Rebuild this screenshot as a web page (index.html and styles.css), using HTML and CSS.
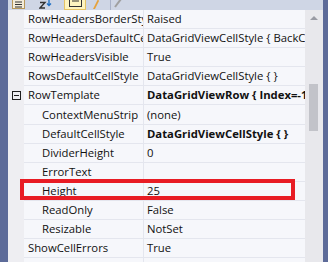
FILE: index.html
```html
<!DOCTYPE html>
<html>
<head>
<meta charset="utf-8">
<link rel="stylesheet" href="styles.css">
</head>
<body>
<div class="frame">
  <div class="toolbar">
    <span class="tb tb-cat">
      <svg width="13" height="16" viewBox="0 0 13 16"><rect x="0.5" y="0.5" width="12" height="15" fill="#f3ecd9" stroke="#b8985a"/><path d="M3 9h7M3 11.5h7M3 14h7" stroke="#333" stroke-width="1"/></svg>
    </span>
    <span class="tb tb-az">
      <svg width="14" height="16" viewBox="0 0 14 16"><path d="M1 9.5h5L1 15h5" fill="none" stroke="#333" stroke-width="1.4"/><path d="M10 6v6M8 10.5l2 2 2-2" fill="none" stroke="#1e6fc4" stroke-width="1.3"/></svg>
    </span>
    <span class="tb tb-sel">
      <svg width="13" height="16" viewBox="0 0 13 16"><rect x="0.5" y="0.5" width="12" height="14" fill="none" stroke="#333"/><path d="M3 9h7" stroke="#333"/></svg>
    </span>
    <span class="tb tb-ev">
      <svg width="8" height="16" viewBox="0 0 8 16"><path d="M6 6L1 16h2l4-8z" fill="#e6a23c"/></svg>
    </span>
    <span class="tb-sep"></span>
    <span class="tb tb-pg">
      <svg width="8" height="16" viewBox="0 0 8 16"><path d="M1 14l6-8" stroke="#a0a0a0" stroke-width="2"/></svg>
    </span>
  </div>
  <div class="main">
    <div class="grid">
      <div class="row"><div class="gut"></div><div class="name">RowHeadersBorderStyle</div><div class="val">Raised</div></div>
      <div class="row"><div class="gut"></div><div class="name">RowHeadersDefaultCellStyle</div><div class="val">DataGridViewCellStyle { BackColor=Color [Control] }</div></div>
      <div class="row"><div class="gut"></div><div class="name">RowHeadersVisible</div><div class="val">True</div></div>
      <div class="row"><div class="gut"></div><div class="name">RowsDefaultCellStyle</div><div class="val">DataGridViewCellStyle { }</div></div>
      <div class="row"><div class="gut"><span class="minus"></span></div><div class="name">RowTemplate</div><div class="val bold">DataGridViewRow { Index=-1 }</div></div>
      <div class="row"><div class="gut"></div><div class="name sub">ContextMenuStrip</div><div class="val">(none)</div></div>
      <div class="row"><div class="gut"></div><div class="name sub">DefaultCellStyle</div><div class="val bold">DataGridViewCellStyle { }</div></div>
      <div class="row"><div class="gut"></div><div class="name sub">DividerHeight</div><div class="val">0</div></div>
      <div class="row"><div class="gut"></div><div class="name sub">ErrorText</div><div class="val"></div></div>
      <div class="row hl"><div class="gut"></div><div class="name sub">Height</div><div class="val">25</div><span class="mark"></span></div>
      <div class="row"><div class="gut"></div><div class="name sub">ReadOnly</div><div class="val">False</div></div>
      <div class="row"><div class="gut"></div><div class="name sub">Resizable</div><div class="val">NotSet</div></div>
      <div class="row"><div class="gut"></div><div class="name">ShowCellErrors</div><div class="val">True</div></div>
      <div class="row"><div class="gut"></div><div class="name">ShowEditingIcon</div><div class="val">True</div></div>
    </div>
    <div class="scroll">
      <span class="arrow"></span>
      <span class="thumb"></span>
    </div>
  </div>
</div>
</body>
</html>
```

FILE: styles.css
```css
html, body {
  margin: 0;
  padding: 0;
}
body {
  background: #5d6b99;
  width: 328px;
  height: 262px;
  overflow: hidden;
  font-family: "Open Sans", "Noto Sans", sans-serif;
  font-size: 11.3px;
  color: #111;
}
.frame {
  margin: 0 5px 0 8px;
  height: 262px;
  display: flex;
  flex-direction: column;
  overflow: hidden;
}
.toolbar {
  height: 10px;
  flex: none;
  background: #cfd6e5;
  display: flex;
  align-items: flex-end;
  overflow: hidden;
  padding-left: 4px;
}
.tb {
  display: flex;
  align-items: flex-end;
  height: 16px;
  margin-bottom: 1px;
}
.tb svg { display: block; }
.tb-cat { margin-right: 14px; }
.tb-az { margin-right: 11px; }
.tb-sel {
  width: 22px;
  height: 20px;
  margin-bottom: 0;
  box-sizing: border-box;
  border: 1px solid #e5c365;
  background: #fdf4bf;
  justify-content: center;
  align-items: flex-end;
  padding-bottom: 1px;
  margin-right: 6px;
}
.tb-ev { margin-right: 10px; }
.tb-sep {
  width: 1px;
  height: 10px;
  background: #a9b2c8;
  margin-right: 3px;
}
.main {
  flex: 1;
  display: flex;
  min-height: 0;
}
.grid {
  flex: 1;
  display: grid;
  grid-auto-rows: 19.1px;
  align-content: start;
  background: #f6f7fb;
  overflow: hidden;
}
.row {
  position: relative;
  display: grid;
  grid-template-columns: 16px 120px 1fr;
  white-space: nowrap;
}
.gut {
  background: #eeeef2;
  display: flex;
  align-items: center;
  justify-content: center;
}
.name, .val {
  overflow: hidden;
  border-bottom: 1px solid #e4e6ee;
  display: flex;
  align-items: center;
  line-height: 14px;
}
.name {
  padding-left: 4px;
  border-right: 1px solid #e4e6ee;
}
.name.sub { padding-left: 18px; }
.val { padding-left: 3px; }
.bold { font-weight: bold; }
.minus {
  width: 9px;
  height: 9px;
  box-sizing: border-box;
  border: 1px solid #1e1e1e;
  position: relative;
  margin-left: 1px;
}
.minus::after {
  content: "";
  position: absolute;
  left: 1px;
  right: 1px;
  top: 3px;
  height: 1px;
  background: #1e1e1e;
}
.mark {
  position: absolute;
  left: 12px;
  top: -3px;
  width: 275px;
  height: 21px;
  box-sizing: border-box;
  border: 4px solid #e81c24;
}
.scroll {
  width: 18px;
  flex: none;
  background: #e8e8ec;
  position: relative;
}
.arrow {
  position: absolute;
  left: 5px;
  top: 6px;
  width: 0;
  height: 0;
  border-left: 4px solid transparent;
  border-right: 4px solid transparent;
  border-bottom: 4px solid #999ba4;
}
.thumb {
  position: absolute;
  left: 4px;
  top: 74px;
  width: 9px;
  height: 47px;
  background: #c2c3c9;
}
```
